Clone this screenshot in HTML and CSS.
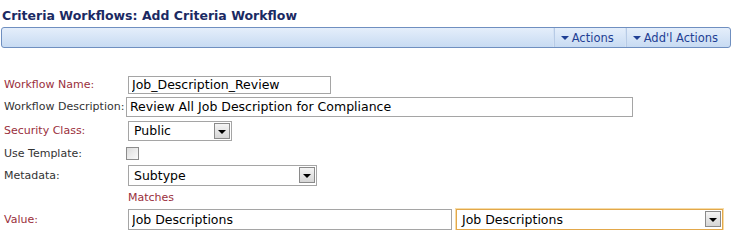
FILE: index.html
```html
<!DOCTYPE html>
<html>
<head>
<meta charset="utf-8">
<link rel="stylesheet" href="styles.css">
</head>
<body>
<h1 class="title">Criteria Workflows: Add Criteria Workflow</h1>
<div class="toolbar">
  <div class="tb-spacer"></div>
  <div class="tb-btn"><span class="tri"></span>Actions</div>
  <div class="tb-btn last"><span class="tri"></span>Add'l Actions</div>
</div>
<form class="form">
  <div class="row r1">
    <label class="lbl req">Workflow Name:</label>
    <div class="field off3"><input class="text w-name" type="text" value="Job_Description_Review"></div>
  </div>
  <div class="row r2">
    <label class="lbl">Workflow Description:</label>
    <div class="field off1"><input class="text w-desc" type="text" value="Review All Job Description for Compliance"></div>
  </div>
  <div class="row r3">
    <label class="lbl req">Security Class:</label>
    <div class="field off3"><div class="select w-sec"><span class="sel-val">Public</span><span class="sel-btn"><span class="sel-tri"></span></span></div></div>
  </div>
  <div class="row r4">
    <label class="lbl">Use Template:</label>
    <div class="field off1"><span class="check"></span></div>
  </div>
  <div class="row r5">
    <label class="lbl">Metadata:</label>
    <div class="field off3"><div class="select w-meta"><span class="sel-val">Subtype</span><span class="sel-btn"><span class="sel-tri"></span></span></div></div>
  </div>
  <div class="row r6">
    <span class="lbl"></span>
    <div class="field off3"><span class="matches">Matches</span></div>
  </div>
  <div class="row r7">
    <label class="lbl req">Value:</label>
    <div class="field off3 pair">
      <input class="text w-val" type="text" value="Job Descriptions">
      <div class="select w-valsel focus"><span class="sel-val">Job Descriptions</span><span class="sel-btn"><span class="sel-tri"></span></span></div>
    </div>
  </div>
</form>
</body>
</html>
```

FILE: styles.css
```css
html, body {
  margin: 0;
  padding: 0;
  background: #ffffff;
}
body {
  font-family: "DejaVu Sans", Verdana, sans-serif;
  font-size: 11px;
  color: #333333;
  width: 733px;
  height: 230px;
  overflow: hidden;
}
.title {
  margin: 0;
  padding: 8px 0 0 2px;
  height: 19px;
  font-size: 12.5px;
  font-weight: bold;
  color: #1b2a63;
  line-height: 15px;
}
.toolbar {
  margin: 0 2px 0 1px;
  height: 19px;
  border: 1px solid #6f8fc0;
  border-radius: 3px;
  background: linear-gradient(#e4eefb, #c8dbf2);
  display: flex;
  align-items: stretch;
}
.tb-spacer {
  flex: 1;
}
.tb-btn {
  display: flex;
  align-items: center;
  gap: 3px;
  padding: 0 11px 0 7px;
  color: #1f3f94;
  font-size: 11.5px;
  border-left: 1px solid #d4e2f4;
  box-shadow: inset 1px 0 0 #b7cbe6;
}
.tb-btn.last {
  padding-right: 12px;
}
.tri {
  display: inline-block;
  width: 0;
  height: 0;
  border-left: 4px solid transparent;
  border-right: 4px solid transparent;
  border-top: 4px solid #1f3f94;
}
.form {
  margin-top: 26px;
}
.row {
  display: flex;
  align-items: center;
}
.r1 { height: 21px; }
.r2 { height: 23px; }
.r3 { height: 25px; }
.r4 { height: 20px; }
.r5 { height: 24px; }
.r6 { height: 20px; }
.r7 { height: 24px; }
.lbl {
  width: 121px;
  padding-left: 4px;
  flex: none;
  white-space: nowrap;
}
.req {
  color: #9a2f3c;
}
.field {
  display: flex;
  align-items: center;
}
.off3 { margin-left: 3px; }
.off1 { margin-left: 1px; }
.text {
  box-sizing: border-box;
  margin: 0;
  padding: 0 3px;
  border: 1px solid #a5a5a5;
  font-family: "DejaVu Sans", Verdana, sans-serif;
  font-size: 12.5px;
  color: #000;
  background: #fff;
  outline: none;
}
.w-name { width: 203px; height: 18px; }
.w-desc { width: 507px; height: 20px; }
.w-val { width: 324px; height: 21px; }
.pair { gap: 4px; }
.select {
  box-sizing: border-box;
  display: flex;
  align-items: center;
  border: 1px solid #a5a5a5;
  background: #fff;
  height: 20px;
  padding: 1px;
  font-size: 12.5px;
  color: #000;
}
.sel-val {
  flex: 1;
  padding-left: 4px;
  white-space: nowrap;
  overflow: hidden;
}
.sel-btn {
  box-sizing: border-box;
  width: 16px;
  height: 16px;
  border: 1px solid #8a8a8a;
  background: linear-gradient(#f4f4f4, #d6d6d6);
  display: flex;
  align-items: center;
  justify-content: center;
}
.sel-tri {
  width: 0;
  height: 0;
  border-left: 4px solid transparent;
  border-right: 4px solid transparent;
  border-top: 4px solid #000;
  margin-top: 2px;
}
.w-sec { width: 104px; }
.w-meta { width: 189px; height: 21px; }
.w-valsel { width: 267px; height: 21px; }
.focus {
  border-color: #e3a84a;
  box-shadow: 0 0 0 1px #f6dca8;
}
.check {
  box-sizing: border-box;
  display: block;
  width: 13px;
  height: 13px;
  border: 1px solid #8c8c8c;
  background: linear-gradient(135deg, #dcdcdc, #fbfbfb);
}
.matches {
  color: #9a2f3c;
}
```
